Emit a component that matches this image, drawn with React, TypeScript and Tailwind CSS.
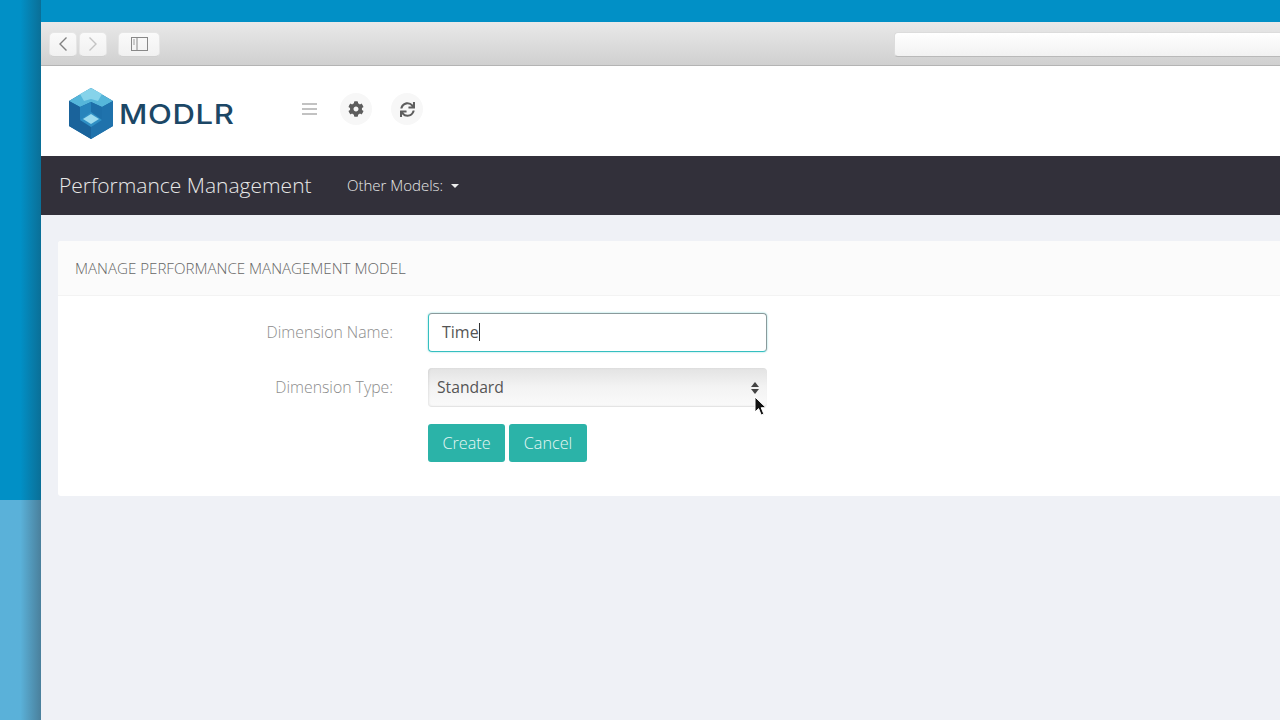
import { FaCog, FaSync } from "react-icons/fa";

function Logo() {
  return (
    <svg width="46" height="51" viewBox="0 0 46 51" className="shrink-0">
      <polygon points="23,0 45,13 45,38 23,51 1,38 1,13" fill="#1b6aa3" />
      {/* top faces */}
      <polygon points="23,0 45,13 34,19 23,14 12,19 1,13" fill="#55b6da" />
      <polygon points="23,0 34,6 30,13 23,11 16,13 12,6" fill="#86d3ea" />
      <polygon points="1,13 12,19 12,32 23,38 23,51 1,38" fill="#1a639b" />
      <polygon points="45,13 34,19 34,32 23,38 23,51 45,38" fill="#1f72ac" />
      {/* hollow */}
      <polygon points="23,14 34,19 34,32 23,26" fill="#1d6fa9" />
      <polygon points="23,14 12,19 12,32 23,26" fill="#2784bc" />
      <polygon points="12,32 23,24 34,32 23,39" fill="#2f8fc4" />
      <polygon points="15,31 23,26 31,31 23,36" fill="#9bdbef" />
    </svg>
  );
}

function ToolbarButton({ className, children }: { className: string; children: React.ReactNode }) {
  return (
    <div className={`h-[25px] rounded-[5px] border border-[#e6e6e6] border-b-[#d0d0d0] bg-gradient-to-b from-[#fafafa] to-[#f1f1f1] flex items-center justify-center ${className}`}>
      {children}
    </div>
  );
}

function CircleIcon({ children }: { children: React.ReactNode }) {
  return (
    <div className="w-8 h-8 rounded-full bg-[#f7f7f7] flex items-center justify-center text-[#5d5d5d]">
      {children}
    </div>
  );
}

export default function App() {
  return (
    <div className="w-[1280px] h-[720px] overflow-hidden flex bg-[#0190c6] text-[#555] font-['Open_Sans',sans-serif]">
      {/* desktop behind the window */}
      <div className="w-[41px] shrink-0 flex flex-col">
        <div className="h-[500px] bg-gradient-to-r from-[#0190c6] from-50% to-[#0a6f97]" />
        <div className="flex-1 bg-gradient-to-r from-[#5ab1d9] from-50% to-[#4a809c]" />
      </div>

      {/* browser window */}
      <div className="flex-1 min-w-0 mt-[22px] flex flex-col bg-[#eff1f6]">
        <div className="h-11 shrink-0 flex items-center pl-2 pt-px bg-gradient-to-b from-[#e9e9e9] to-[#d0d0d0] border-b border-[#b4b4b4]">
          <ToolbarButton className="w-[28px] text-[#808080]">
            <svg width="10" height="16" viewBox="0 0 10 16" fill="none" stroke="currentColor" strokeWidth="1.4"><path d="M8.5 1.5 2 8l6.5 6.5" /></svg>
          </ToolbarButton>
          <ToolbarButton className="w-[28px] ml-0.5 text-[#c4c4c4]">
            <svg width="10" height="16" viewBox="0 0 10 16" fill="none" stroke="currentColor" strokeWidth="1.4"><path d="M1.5 1.5 8 8l-6.5 6.5" /></svg>
          </ToolbarButton>
          <ToolbarButton className="w-[42px] ml-[11px] text-[#888]">
            <svg width="17" height="14" viewBox="0 0 17 14" fill="none" stroke="currentColor"><rect x=".5" y=".5" width="16" height="13" /><path d="M6 .5v13" /><path d="M2 3h2M2 5h2M2 7h2" strokeWidth=".8" /></svg>
          </ToolbarButton>
          <div className="ml-[734px] flex-1 h-[25px] rounded-l-[4px] border border-r-0 border-[#dcdcdc] border-b-[#b9b9b9] bg-gradient-to-b from-white to-[#f2f2f2]" />
        </div>

        <header className="h-[90px] shrink-0 bg-white flex items-start">
          <div className="w-[165px] flex items-center gap-[5px] ml-[27px] mt-[22px]">
            <Logo />
            <span className="mt-0.5 text-[27px] leading-none font-medium tracking-[0.6px] text-[#1c4766] font-['Inter',sans-serif] origin-left scale-x-[1.15]">MODLR</span>
          </div>
          <div className="ml-[69px] mt-[27px] flex items-center">
            <div className="w-[15px] flex flex-col gap-[3px]">
              <div className="h-0.5 bg-[#c2c2c2]" />
              <div className="h-0.5 bg-[#c2c2c2]" />
              <div className="h-0.5 bg-[#c2c2c2]" />
            </div>
            <div className="ml-[23px]"><CircleIcon><FaCog size={16} /></CircleIcon></div>
            <div className="ml-[19px]"><CircleIcon><FaSync size={15} /></CircleIcon></div>
          </div>
        </header>

        <nav className="h-[59px] shrink-0 bg-[#32303a] flex items-center pl-[18px] text-[#e8e8e8]">
          <span className="w-[254px] text-[21px] leading-none font-light whitespace-nowrap">Performance Management</span>
          <span className="ml-[34px] text-[15px] font-light">Other Models:</span>
          <span className="ml-2 border-x-[4px] border-t-[4px] border-x-transparent border-t-[#eee]" />
        </nav>

        <main className="flex-1 pt-[26px] pl-[17px]">
          <section className="h-[255px] bg-white rounded-l-[3px]">
            <div className="h-[55px] flex items-center pl-[17px] bg-[#fbfbfb] border-b border-[#f3f3f3] text-[15.1px] font-light text-[#666] uppercase rounded-tl-[3px]">
              Manage Performance Management Model
            </div>
            <div className="pt-[17px] flex flex-col gap-4">
              <div className="flex items-center">
                <label className="w-[335px] text-right text-[15.8px] font-light text-[#8c8c8c]">Dimension Name:</label>
                <div className="ml-[35px] w-[339px] h-[39px] flex items-center pl-[13px] pb-0.5 rounded-[4px] border border-[#8a9a9c] border-b-[#35bfc0] border-l-[#35bfc0] text-[16px] text-[#555] shadow-[0_0_2px_rgba(40,190,190,.6)]">
                  Time<span className="w-px h-[18px] bg-[#333]" />
                </div>
              </div>
              <div className="flex items-center">
                <label className="w-[335px] text-right text-[15.8px] font-light text-[#8c8c8c]">Dimension Type:</label>
                <div className="relative ml-[35px] w-[339px] h-[39px] flex items-center justify-between pl-[9px] pr-[8px] pt-0.5 rounded-[4px] border-b border-[#e4e4e4] bg-gradient-to-b from-[#e3e3e3] via-[#f3f3f3] to-[#fafafa] text-[15.7px] text-[#555] shadow-[inset_1px_0_2px_rgba(0,0,0,.08)]">
                  Standard
                  <div className="flex flex-col gap-0.5">
                    <span className="border-x-[4px] border-b-[5px] border-x-transparent border-b-[#444]" />
                    <span className="border-x-[4px] border-t-[5px] border-x-transparent border-t-[#444]" />
                  </div>
                  {/* mouse pointer */}
                  <svg width="14" height="21" viewBox="0 0 14 21" className="absolute left-[326px] top-[28px]">
                    <path d="M1 1v15l3.6-3.4 2.6 6.4 2.6-1.1-2.6-6.2H12z" fill="#111" stroke="#fff" strokeWidth="1" />
                  </svg>
                </div>
              </div>
              <div className="flex gap-1 ml-[370px] mt-px">
                <button className="w-[77px] h-[38px] rounded-[3px] bg-[#2bb3a8] text-[#e6f7f5] text-[16.2px] font-light">Create</button>
                <button className="w-[78px] h-[38px] rounded-[3px] bg-[#2bb3a8] text-[#e6f7f5] text-[16.2px] font-light">Cancel</button>
              </div>
            </div>
          </section>
        </main>
      </div>
    </div>
  );
}
